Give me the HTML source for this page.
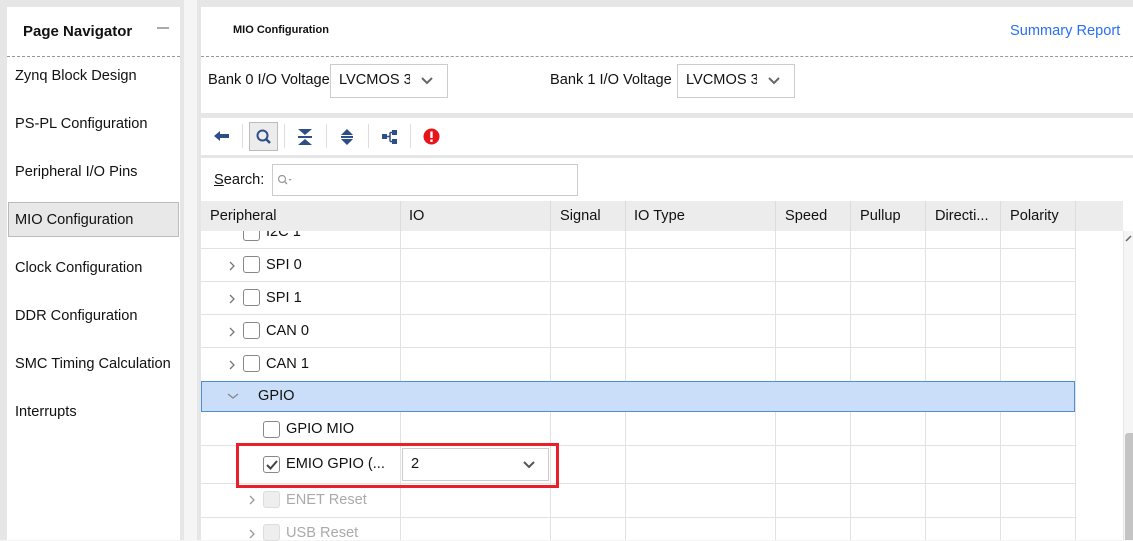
<!DOCTYPE html>
<html><head><style>
*{margin:0;padding:0;box-sizing:border-box}
body{width:1133px;height:540px;overflow:hidden;background:#f5f5f5;font-family:"Liberation Sans",Arial,sans-serif;font-size:14.6px;color:#111;position:relative}
.a{position:absolute}
.nav{left:15px}
.hl{background:#fff}
.hr{position:absolute;left:201px;width:874px;height:1px;background:#e2e2e2}
.cb{position:absolute;width:17px;height:17px;border:1.5px solid #888;border-radius:3px;background:#fff}
.th{position:absolute;top:208px}
.sep{position:absolute;top:124px;width:1px;height:24px;background:#ddd}
.vl{position:absolute;top:201px;width:1px;height:339px;background:#e2e2e2}
</style></head><body>
<!-- left panel -->
<div class="a" style="left:0;top:0;width:184px;height:540px;background:#e6e6e6"></div>
<div class="a" style="left:7px;top:7px;width:173px;height:533px;background:#fff"></div>
<div class="a" style="left:23px;top:23px;font-weight:bold;font-size:15px">Page Navigator</div>
<div class="a" style="left:157px;top:27px;width:12px;height:2px;background:#aaa"></div>
<div class="a" style="left:7px;top:56px;width:173px;border-top:1px dashed #999"></div>
<div class="a nav" style="top:68px">Zynq Block Design</div>
<div class="a nav" style="top:116px">PS-PL Configuration</div>
<div class="a nav" style="top:164px">Peripheral I/O Pins</div>
<div class="a" style="left:8px;top:202px;width:171px;height:35px;background:#e8e8e8;border:1px solid #bbb"></div>
<div class="a nav" style="top:212px">MIO Configuration</div>
<div class="a nav" style="top:260px">Clock Configuration</div>
<div class="a nav" style="top:308px">DDR Configuration</div>
<div class="a nav" style="top:356px">SMC Timing Calculation</div>
<div class="a nav" style="top:404px">Interrupts</div>
<!-- right panel -->
<div class="a" style="left:197px;top:0;width:936px;height:540px;background:#e6e6e6"></div>
<div class="a hl" style="left:201px;top:7px;width:932px;height:106px"></div>
<div class="a" style="left:233px;top:24px;font-weight:bold;font-size:11px">MIO Configuration</div>
<div class="a" style="left:1010px;top:23px;color:#2a6ef5">Summary Report</div>
<div class="a" style="left:201px;top:56px;width:932px;border-top:1px dashed #999"></div>
<div class="a" style="left:208px;top:72px">Bank 0 I/O Voltage</div>
<div class="a" style="left:330px;top:64px;width:118px;height:34px;border:1px solid #ccc;background:#fff"></div>
<div class="a" style="left:339px;top:72px;width:71px;overflow:hidden;white-space:nowrap">LVCMOS 3</div>
<svg class="a" style="left:420px;top:76px" width="14" height="10"><path d="M2 2 L7 7 L12 2" fill="none" stroke="#666" stroke-width="2"/></svg>
<div class="a" style="left:550px;top:72px">Bank 1 I/O Voltage</div>
<div class="a" style="left:677px;top:64px;width:118px;height:34px;border:1px solid #ccc;background:#fff"></div>
<div class="a" style="left:686px;top:72px;width:71px;overflow:hidden;white-space:nowrap">LVCMOS 3</div>
<svg class="a" style="left:767px;top:76px" width="14" height="10"><path d="M2 2 L7 7 L12 2" fill="none" stroke="#666" stroke-width="2"/></svg>
<!-- toolbar -->
<div class="a hl" style="left:201px;top:118px;width:932px;height:37px"></div>
<svg class="a" style="left:213px;top:129px" width="18" height="14"><path d="M1 7 L7 2 V5 H16 V9 H7 V12 Z" fill="#2d4e86"/></svg>
<div class="sep" style="left:242px"></div>
<div class="a" style="left:249px;top:122px;width:29px;height:29px;background:#ececec;border:1px solid #bbb"></div>
<svg class="a" style="left:255px;top:128px" width="18" height="18"><circle cx="7.5" cy="7.5" r="5" fill="none" stroke="#2d4e86" stroke-width="2"/><path d="M11 11 L15 15" stroke="#2d4e86" stroke-width="2.5"/></svg>
<div class="sep" style="left:284px"></div>
<svg class="a" style="left:297px;top:128px" width="16" height="18"><path d="M1 1 H15 L8 7 Z M1 17 H15 L8 11 Z" fill="#2d4e86"/><rect x="1" y="8" width="14" height="2" fill="#2d4e86"/></svg>
<div class="sep" style="left:326px"></div>
<svg class="a" style="left:339px;top:128px" width="16" height="18"><path d="M2 7 L8 1 L14 7 Z M2 11 L8 17 L14 11 Z" fill="#2d4e86"/><rect x="2" y="8" width="12" height="2" fill="#2d4e86"/></svg>
<div class="sep" style="left:368px"></div>
<svg class="a" style="left:381px;top:128px" width="18" height="18"><rect x="1" y="6" width="5" height="5" fill="#2d4e86"/><rect x="11" y="2" width="5" height="5" fill="#2d4e86"/><rect x="11" y="11" width="5" height="5" fill="#2d4e86"/><path d="M6 8.5 H9 M9 4.5 V13.5 M9 4.5 H11 M9 13.5 H11" stroke="#2d4e86" stroke-width="1.5" fill="none"/></svg>
<div class="sep" style="left:410px"></div>
<svg class="a" style="left:423px;top:128px" width="17" height="17"><circle cx="8.5" cy="8.5" r="8" fill="#e8141b"/><rect x="7.3" y="3.5" width="2.4" height="6.5" fill="#fff"/><rect x="7.3" y="11.5" width="2.4" height="2.4" fill="#fff"/></svg>
<!-- search -->
<div class="a hl" style="left:201px;top:158px;width:932px;height:382px"></div>
<div class="a" style="left:214px;top:172px"><u>S</u>earch:</div>
<div class="a" style="left:272px;top:164px;width:306px;height:32px;border:1px solid #ccc"></div>
<svg class="a" style="left:277px;top:174px" width="16" height="12"><circle cx="5" cy="5" r="3.5" fill="none" stroke="#999" stroke-width="1.2"/><path d="M7.5 7.5 L10 10" stroke="#999" stroke-width="1.3"/><path d="M11.5 5 L14.5 5 L13 7 Z" fill="#999"/></svg>
<!-- scrollbar -->
<div class="a" style="left:1123px;top:231px;width:10px;height:309px;background:#f5f5f5;border-left:1px solid #e6e6e6"></div>
<div class="a" style="left:1125px;top:433px;width:8px;height:107px;background:#c4c4c4;border-radius:3px 0 0 0"></div>
<svg class="a" style="left:1125px;top:234px" width="8" height="8"><path d="M1 7 L6 2" stroke="#666" stroke-width="1.5"/></svg>
<!-- column lines -->
<div class="vl" style="left:400px"></div>
<div class="vl" style="left:550px"></div>
<div class="vl" style="left:625px"></div>
<div class="vl" style="left:775px"></div>
<div class="vl" style="left:850px"></div>
<div class="vl" style="left:925px"></div>
<div class="vl" style="left:1000px"></div>
<div class="vl" style="left:1075px"></div>
<!-- rows -->
<div class="hr" style="top:248px"></div>
<div class="hr" style="top:281px"></div>
<div class="hr" style="top:314px"></div>
<div class="hr" style="top:347px"></div>
<div class="hr" style="top:445px"></div>
<div class="hr" style="top:483px"></div>
<div class="hr" style="top:517px"></div>
<div class="cb" style="left:243px;top:224px"></div>
<div class="a" style="left:266px;top:224px">I2C 1</div>
<!-- header on top -->
<div class="a" style="left:201px;top:201px;width:922px;height:30px;background:#ececec"></div>
<div class="th" style="left:210px">Peripheral</div>
<div class="th" style="left:409px">IO</div>
<div class="th" style="left:560px">Signal</div>
<div class="th" style="left:634px">IO Type</div>
<div class="th" style="left:785px">Speed</div>
<div class="th" style="left:860px">Pullup</div>
<div class="th" style="left:935px">Directi...</div>
<div class="th" style="left:1010px">Polarity</div>
<div class="a" style="left:400px;top:201px;width:1px;height:30px;background:#dcdcdc"></div>
<div class="a" style="left:550px;top:201px;width:1px;height:30px;background:#dcdcdc"></div>
<div class="a" style="left:625px;top:201px;width:1px;height:30px;background:#dcdcdc"></div>
<div class="a" style="left:775px;top:201px;width:1px;height:30px;background:#dcdcdc"></div>
<div class="a" style="left:850px;top:201px;width:1px;height:30px;background:#dcdcdc"></div>
<div class="a" style="left:925px;top:201px;width:1px;height:30px;background:#dcdcdc"></div>
<div class="a" style="left:1000px;top:201px;width:1px;height:30px;background:#dcdcdc"></div>
<div class="a" style="left:1075px;top:201px;width:1px;height:30px;background:#dcdcdc"></div>

<svg class="a" style="left:228px;top:260px" width="8" height="12"><path d="M2 2 L6 6 L2 10" fill="none" stroke="#777" stroke-width="1.3"/></svg>
<div class="cb" style="left:243px;top:256px"></div><div class="a" style="left:266px;top:257px">SPI 0</div>
<svg class="a" style="left:228px;top:293px" width="8" height="12"><path d="M2 2 L6 6 L2 10" fill="none" stroke="#777" stroke-width="1.3"/></svg>
<div class="cb" style="left:243px;top:289px"></div><div class="a" style="left:266px;top:290px">SPI 1</div>
<svg class="a" style="left:228px;top:326px" width="8" height="12"><path d="M2 2 L6 6 L2 10" fill="none" stroke="#777" stroke-width="1.3"/></svg>
<div class="cb" style="left:243px;top:322px"></div><div class="a" style="left:266px;top:323px">CAN 0</div>
<svg class="a" style="left:228px;top:359px" width="8" height="12"><path d="M2 2 L6 6 L2 10" fill="none" stroke="#777" stroke-width="1.3"/></svg>
<div class="cb" style="left:243px;top:355px"></div><div class="a" style="left:266px;top:356px">CAN 1</div>
<!-- GPIO selected -->
<div class="a" style="left:201px;top:381px;width:874px;height:31px;background:#cadefa;border:1px solid #4a90d9"></div>
<svg class="a" style="left:226px;top:392px" width="14" height="8"><path d="M2 2 L7 6 L12 2" fill="none" stroke="#888" stroke-width="1.3"/></svg>
<div class="a" style="left:258px;top:388px">GPIO</div>
<div class="cb" style="left:263px;top:421px"></div><div class="a" style="left:286px;top:421px">GPIO MIO</div>
<!-- EMIO -->
<div class="cb" style="left:263px;top:456px"></div>
<svg class="a" style="left:265px;top:458px" width="14" height="14"><path d="M2 7 L5.5 10.5 L12 3" fill="none" stroke="#444" stroke-width="2"/></svg>
<div class="a" style="left:286px;top:456px">EMIO GPIO (...</div>
<div class="a" style="left:402px;top:448px;width:147px;height:33px;border:1px solid #ccc;background:#fff"></div>
<div class="a" style="left:411px;top:456px">2</div>
<svg class="a" style="left:522px;top:460px" width="14" height="10"><path d="M2 2 L7 7 L12 2" fill="none" stroke="#555" stroke-width="2"/></svg>
<div class="a" style="left:236px;top:443px;width:323px;height:45px;border:3px solid #e8202a"></div>
<svg class="a" style="left:248px;top:494px" width="8" height="12"><path d="M2 2 L6 6 L2 10" fill="none" stroke="#999" stroke-width="1.3"/></svg>
<div class="a" style="left:263px;top:491px;width:17px;height:17px;border:1.5px solid #ddd;border-radius:3px;background:#eee"></div>
<div class="a" style="left:286px;top:492px;color:#aaa">ENET Reset</div>
<svg class="a" style="left:248px;top:528px" width="8" height="12"><path d="M2 2 L6 6 L2 10" fill="none" stroke="#999" stroke-width="1.3"/></svg>
<div class="a" style="left:263px;top:524px;width:17px;height:17px;border:1.5px solid #ddd;border-radius:3px;background:#eee"></div>
<div class="a" style="left:286px;top:525px;color:#aaa">USB Reset</div>
</body></html>
